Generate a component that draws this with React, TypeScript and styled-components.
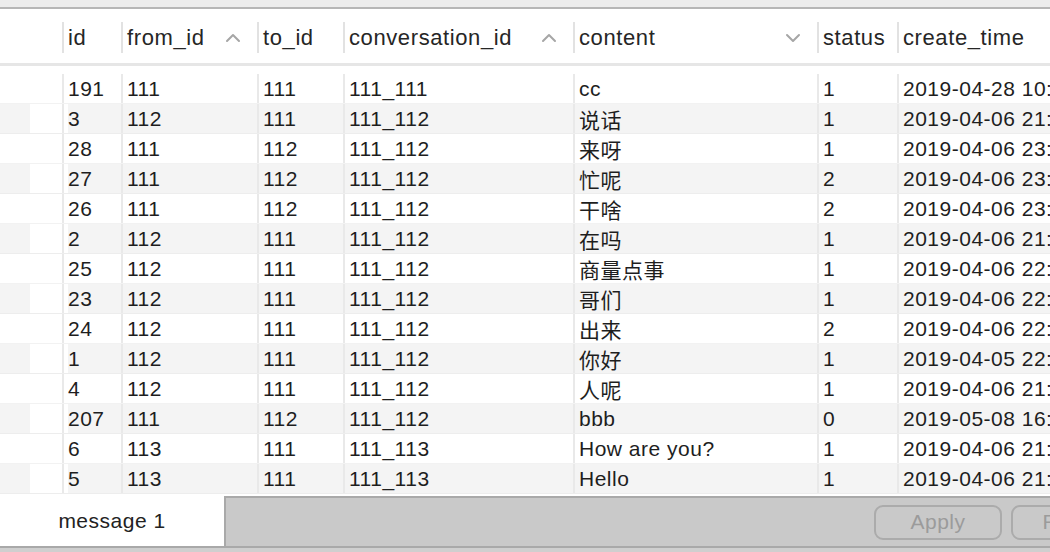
import React from 'react';
import styled, { createGlobalStyle } from 'styled-components';

const GlobalStyle = createGlobalStyle`
  html, body {
    margin: 0;
    padding: 0;
    background: #ffffff;
    overflow: hidden;
  }
  body {
    font-family: "Liberation Sans", Arial, "Noto Sans CJK SC", sans-serif;
    color: #222;
  }
`;

const columns = [
  { key: 'id', label: 'id', width: 59 },
  { key: 'from_id', label: 'from_id', width: 136, sort: 'up' },
  { key: 'to_id', label: 'to_id', width: 86 },
  { key: 'conversation_id', label: 'conversation_id', width: 230, sort: 'up' },
  { key: 'content', label: 'content', width: 244, sort: 'down' },
  { key: 'status', label: 'status', width: 80 },
  { key: 'create_time', label: 'create_time', width: 220 },
];

const rows = [
  ['191', '111', '111', '111_111', 'cc', '1', '2019-04-28 10:52:11'],
  ['3', '112', '111', '111_112', '说话', '1', '2019-04-06 21:12:40'],
  ['28', '111', '112', '111_112', '来呀', '1', '2019-04-06 23:05:31'],
  ['27', '111', '112', '111_112', '忙呢', '2', '2019-04-06 23:04:12'],
  ['26', '111', '112', '111_112', '干啥', '2', '2019-04-06 23:03:55'],
  ['2', '112', '111', '111_112', '在吗', '1', '2019-04-06 21:10:22'],
  ['25', '112', '111', '111_112', '商量点事', '1', '2019-04-06 22:58:01'],
  ['23', '112', '111', '111_112', '哥们', '1', '2019-04-06 22:50:43'],
  ['24', '112', '111', '111_112', '出来', '2', '2019-04-06 22:52:17'],
  ['1', '112', '111', '111_112', '你好', '1', '2019-04-05 22:31:09'],
  ['4', '112', '111', '111_112', '人呢', '1', '2019-04-06 21:14:30'],
  ['207', '111', '112', '111_112', 'bbb', '0', '2019-05-08 16:20:44'],
  ['6', '113', '111', '111_113', 'How are you?', '1', '2019-04-06 21:20:05'],
  ['5', '113', '111', '111_113', 'Hello', '1', '2019-04-06 21:18:47'],
];

const Window = styled.div`
  width: 1050px;
  height: 552px;
  display: flex;
  flex-direction: column;
  overflow: hidden;
`;

const TopStrip = styled.div`
  height: 7px;
  flex-shrink: 0;
  background: #ececec;
  border-bottom: 2px solid #b6b6b6;
`;

const TableArea = styled.div`
  flex: 1;
  display: flex;
  flex-direction: column;
  overflow: hidden;
  background: #ffffff;
`;

const HeaderRow = styled.div`
  display: flex;
  height: 54px;
  flex-shrink: 0;
  border-bottom: 3px solid #e6e6e6;
`;

const HeaderGutter = styled.div`
  width: 62px;
  flex-shrink: 0;
`;

const HeaderCell = styled.div<{ $w: number }>`
  width: ${p => p.$w}px;
  flex-shrink: 0;
  box-sizing: border-box;
  height: 31px;
  margin-top: 13px;
  border-left: 2px solid #e2e2e2;
  padding: 1px 4px 0;
  display: flex;
  align-items: center;
  justify-content: space-between;
  font-size: 22px;
  letter-spacing: 0.6px;
  color: #262626;
  white-space: nowrap;
  overflow: hidden;
`;

const SortMark = styled.svg`
  width: 16px;
  height: 10px;
  margin-right: 12px;
  flex-shrink: 0;
`;

const Body = styled.div`
  display: flex;
  flex-direction: column;
`;

const Row = styled.div<{ $striped: boolean; $first?: boolean }>`
  display: flex;
  height: ${p => (p.$first ? 38 : 30)}px;
  flex-shrink: 0;
  background: ${p => (p.$striped ? '#f4f4f4' : '#ffffff')};
  box-sizing: border-box;
  padding-top: ${p => (p.$first ? 8 : 0)}px;
  border-bottom: 1px solid ${p => (p.$striped ? '#ededed' : '#f2f2f2')};
`;

const Gutter = styled.div`
  width: 62px;
  flex-shrink: 0;
  display: flex;
`;

const GutterMark = styled.span`
  width: 30px;
`;

const GutterBlank = styled.span`
  width: 32px;
  background: #ffffff;
`;

const Cell = styled.div<{ $w: number; $lead?: boolean }>`
  width: ${p => p.$w}px;
  flex-shrink: 0;
  box-sizing: border-box;
  border-left: 2px solid #e9e9e9;
  padding: 0 4px;
  display: flex;
  align-items: center;
  font-size: 21px;
  letter-spacing: 0.5px;
  color: #1e1e1e;
  white-space: nowrap;
  overflow: hidden;
  box-shadow: ${p => (p.$lead ? 'inset 4px 0 0 #ffffff' : 'none')};
`;

const TabBar = styled.div`
  height: 56px;
  flex-shrink: 0;
  display: flex;
  background: #c9c9c9;
  border-bottom: 4px solid #cfcfcf;
  box-sizing: border-box;
`;

const TabBarInner = styled.div`
  flex: 1;
  display: flex;
  border-top: 2px solid #a9a9a9;
  border-bottom: 2px solid #a9a9a9;
`;

const Tab = styled.div`
  width: 224px;
  margin-top: -2px;
  background: #ffffff;
  border-right: 2px solid #a9a9a9;
  display: flex;
  align-items: center;
  justify-content: center;
  font-size: 21px;
  letter-spacing: 0.5px;
  color: #222;
`;

const Actions = styled.div`
  flex: 1;
  display: flex;
  align-items: center;
  justify-content: flex-end;
  gap: 9px;
  margin-right: -89px;
`;

const ActionButton = styled.button`
  width: 128px;
  height: 35px;
  box-sizing: border-box;
  border: 2px solid #ababab;
  border-radius: 9px;
  background: transparent;
  font-family: "Liberation Sans", Arial, sans-serif;
  font-size: 21px;
  letter-spacing: 0.5px;
  color: #9b9b9b;
  padding: 0;
`;

const Chevron: React.FC<{ dir: string }> = ({ dir }) => (
  <SortMark viewBox="0 0 16 10">
    <polyline
      points={dir === 'up' ? '2,8 8,2 14,8' : '2,2 8,8 14,2'}
      fill="none"
      stroke="#a6a6a6"
      strokeWidth="2"
      strokeLinecap="round"
      strokeLinejoin="round"
    />
  </SortMark>
);

export default function App() {
  return (
    <Window>
      <GlobalStyle />
      <TopStrip />
      <TableArea>
        <HeaderRow>
          <HeaderGutter />
          {columns.map(col => (
            <HeaderCell key={col.key} $w={col.width}>
              <span>{col.label}</span>
              {col.sort && <Chevron dir={col.sort} />}
            </HeaderCell>
          ))}
        </HeaderRow>
        <Body>
          {rows.map((r, i) => {
            const striped = i % 2 === 1;
            return (
              <Row key={r[0]} $striped={striped} $first={i === 0}>
                <Gutter>
                  <GutterMark />
                  {striped && <GutterBlank />}
                </Gutter>
                {r.map((v, j) => (
                  <Cell key={j} $w={columns[j].width} $lead={striped && j === 0}>
                    {v}
                  </Cell>
                ))}
              </Row>
            );
          })}
        </Body>
      </TableArea>
      <TabBar>
        <TabBarInner>
          <Tab>message 1</Tab>
          <Actions>
            <ActionButton>Apply</ActionButton>
            <ActionButton>Revert</ActionButton>
          </Actions>
        </TabBarInner>
      </TabBar>
    </Window>
  );
}
